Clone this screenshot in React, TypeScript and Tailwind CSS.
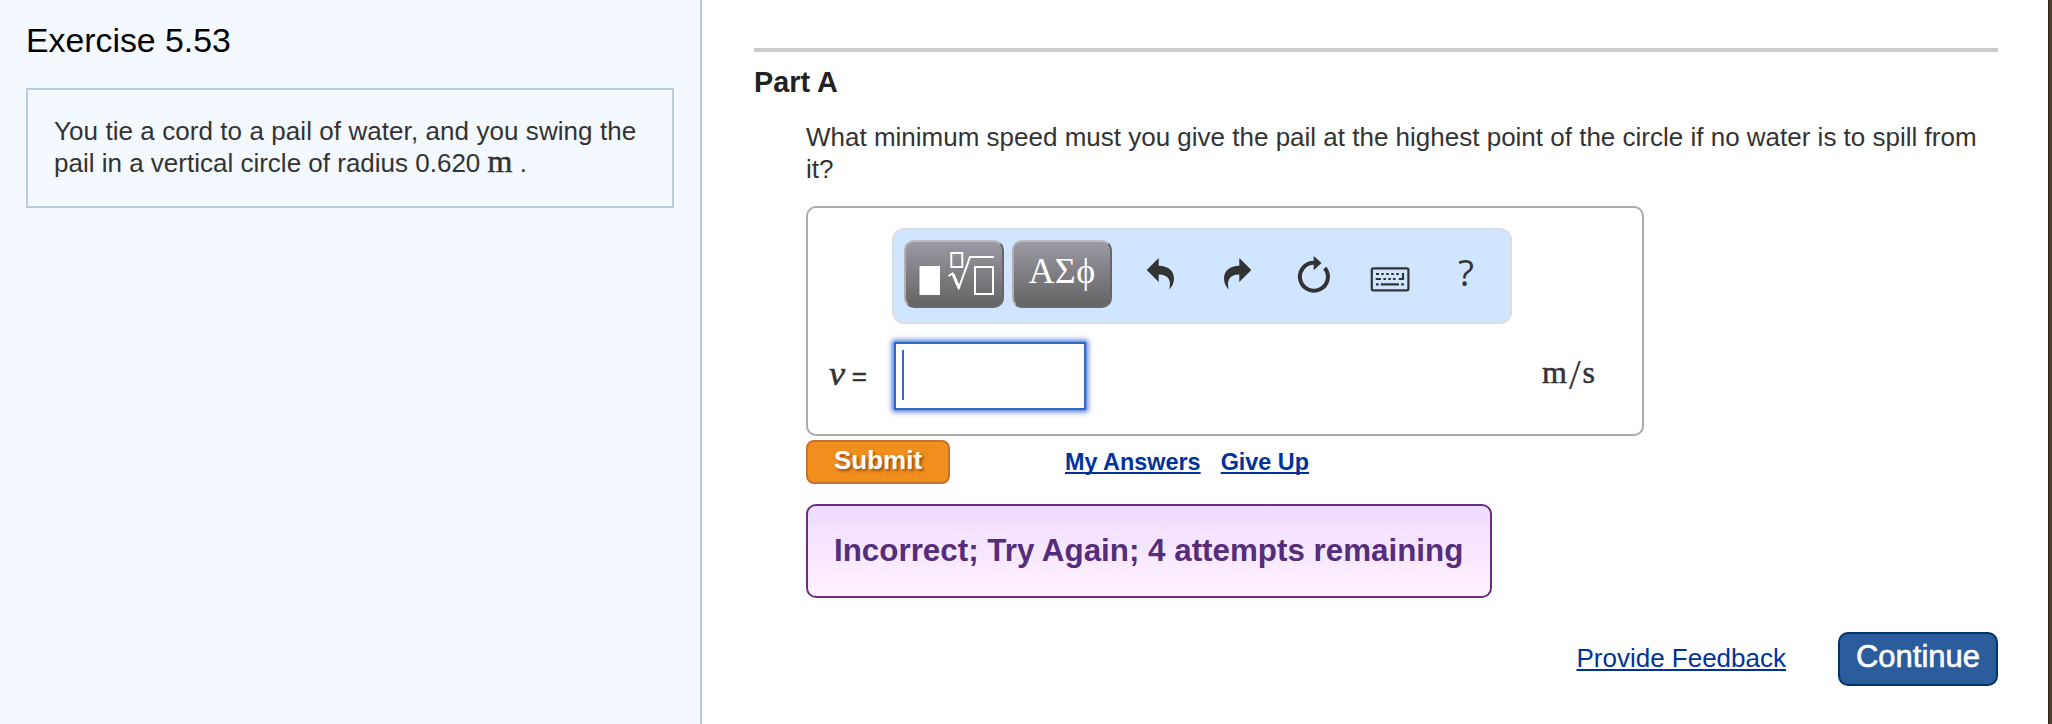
import React from 'react';

const sans = "font-['Liberation_Sans',Arial,sans-serif]";
const serif = "font-['Liberation_Serif','Times_New_Roman',serif]";
const mathStroke = '[-webkit-text-stroke:0.5px_#333]';

const TemplateIcon = () => (
  <svg width="96" height="64" viewBox="2 2 96 64" fill="none" stroke="#fff">
    <rect x="15.5" y="26" width="20.5" height="29" fill="#fff" stroke="none" />
    <rect x="47.3" y="13" width="11" height="14" strokeWidth="2" />
    <path d="M44.5 36L48.5 33.5L54.8 48L66 17H90" strokeWidth="2" />
    <path d="M49 34L55 48" strokeWidth="3" />
    <rect x="71" y="27" width="18" height="27" strokeWidth="2" />
  </svg>
);

const ArrowIcon = ({ className }: { className?: string }) => (
  <svg width="32" height="36" viewBox="0 0 32 36" fill="#333" className={className}>
    <path d="M2.7 14L14.7 2V9.7C24 10 30 14.5 30 22.5C30 27 28 31 25.2 33.5C27.5 25 25 18.5 14.7 18.5V26Z" />
  </svg>
);

const ResetIcon = () => (
  <svg width="36" height="40" viewBox="0 0 36 40">
    <path d="M28.8 13.9A14 14 0 1 1 18 8.7" fill="none" stroke="#333" strokeWidth="4" />
    <path d="M17.7 2V16.3L25.5 8.9Z" fill="#333" />
  </svg>
);

const KeyboardIcon = () => (
  <svg width="40" height="25" viewBox="0 0 40 25" fill="none" stroke="#333" strokeWidth="2.2">
    <rect x="1.8" y="1.3" width="36.6" height="22" rx="1.5" />
    <path d="M6 7H9M11.2 7H13.8M16.2 7H18.8M21.2 7H23.8M26.2 7H28.8" />
    <path d="M5.7 12H11M13.4 12H16M18.2 12H20.8M23 12H25.6M28.8 12H34M33 6V13" />
    <path d="M6 17.3H8.6M10.8 17.3H29M31.2 17.3H33.8" />
  </svg>
);

const ToolButton = ({ children }: { children: React.ReactNode }) => (
  <button className="flex h-[68px] w-[100px] items-center justify-center rounded-[10px] border-2 border-t-[#bbb] border-l-[#b0b0b4] border-r-[#666] border-b-[#6b6b6b] bg-linear-to-b from-[#9b99a3] to-[#646464]">
    {children}
  </button>
);

const Toolbar = () => (
  <div className="flex h-24 w-[620px] items-start rounded-xl border-2 border-[#ddd] bg-[#d0e5ff] p-2.5">
    <div className="flex gap-2">
      <ToolButton>
        <TemplateIcon />
      </ToolButton>
      <ToolButton>
        <span className={`${serif} pb-1.5 text-[36px] leading-[48px] tracking-[0.4px] text-white`}>ΑΣϕ</span>
      </ToolButton>
    </div>
    <ArrowIcon className="mt-4 ml-8" />
    <ArrowIcon className="mt-4 ml-[46px] -scale-x-100" />
    <div className="mt-3.5 ml-[42px]">
      <ResetIcon />
    </div>
    <div className="mt-[27px] ml-[38px]">
      <KeyboardIcon />
    </div>
    <span className="mt-2 ml-12 font-['Open_Sans',sans-serif] text-[37px] leading-[48px] text-[#333]">?</span>
  </div>
);

const AnswerBox = () => (
  <div className="mt-[15px] h-[230px] w-[838px] rounded-[10px] border-2 border-[#aaa] pt-5">
    <div className="pl-[84px]">
      <Toolbar />
    </div>
    <div className="mt-[18px] flex h-[68px] items-center">
      <div className="flex w-[86px] items-baseline pb-[3px] pl-[21px] text-[#333]">
        <span className={`${serif} ${mathStroke} origin-left scale-x-110 text-[33px] leading-8 italic`}>v</span>
        <span className={`${mathStroke} ml-2 text-[26px] leading-8`}>=</span>
      </div>
      <div className="h-[68px] w-48 border-2 border-[#3366cc] bg-white px-1.5 pt-1.5 shadow-[0_0_5px_2px_rgba(51,102,204,0.9)]">
        <div className="h-[50px] w-0.5 bg-[#3366dd]" />
      </div>
      <div className={`${serif} ${mathStroke} ml-[456px] flex items-baseline pb-3 text-[32px] leading-8 text-[#333]`}>
        <span>m</span>
        <span className="mx-0.5 translate-y-1.5 text-[42px] [-webkit-text-stroke:0px]">/</span>
        <span>s</span>
      </div>
    </div>
  </div>
);

export default function App() {
  return (
    <div className={`${sans} flex h-[724px] w-full overflow-hidden bg-white`}>
      <aside className="w-[702px] shrink-0 border-r-2 border-[#b9cddf] bg-[#f4f8ff] pt-5 pl-[26px]">
        <h1 className="text-[33.8px] leading-10 text-black">Exercise 5.53</h1>
        <div className="mt-7 h-[120px] w-[648px] border-2 border-[#b9cddf] px-[26px] pt-[25px] text-[26px] leading-8 whitespace-nowrap text-[#333]">
          <p className="tracking-[0.07px]">You tie a cord to a pail of water, and you swing the</p>
          <p className="h-8">
            pail in a vertical circle of radius 0.620{' '}
            <span className={`${serif} ${mathStroke} text-[32px] leading-[0]`}>m</span> .
          </p>
        </div>
      </aside>

      <main className="w-[1346px] shrink-0 pt-12 pr-[50px] pl-[52px]">
        <hr className="border-t-4 border-[#ccc]" />
        <h2 className="mt-[14px] text-[28.8px] leading-8 font-bold text-[#222]">Part A</h2>
        <section className="pl-[52px]">
          <p className="mt-[23px] text-[26px] leading-8 whitespace-nowrap text-[#333]">
            What minimum speed must you give the pail at the highest point of the circle if no water is to spill from
            <br />
            it?
          </p>
          <div className="pt-1.5">
            <AnswerBox />
          </div>

          {/* Submit row */}
          <div className="mt-1 flex h-11 items-start font-bold">
            <button className="h-11 w-36 rounded-lg border-2 border-[#c87030] bg-[#f08e1e] pb-1 text-[26px] leading-9 text-white [text-shadow:2px_2px_3px_rgba(120,50,0,0.7)]">
              Submit
            </button>
            <div className="ml-[115px] flex gap-5 pt-1.5 text-[23.4px] leading-8 text-[#003399]">
              <a className="underline decoration-2 underline-offset-2 [text-decoration-skip-ink:none]">My Answers</a>
              <a className="underline decoration-2 underline-offset-2 [text-decoration-skip-ink:none]">Give Up</a>
            </div>
          </div>

          <div className="mt-5 flex h-[94px] w-[686px] items-center rounded-[10px] border-2 border-[#6b2c85] bg-linear-to-b from-[#f0dcff] to-[#fff2ff] pl-[26px] text-[31.35px] font-bold whitespace-nowrap text-[#552d7a]">
            Incorrect; Try Again; 4 attempts remaining
          </div>
        </section>

        <div className="mt-[34px] flex h-[54px] items-start justify-end">
          <a className="pt-[10px] text-[26px] leading-8 text-[#003399] underline decoration-2 underline-offset-2 [text-decoration-skip-ink:none]">
            Provide Feedback
          </a>
          <button className="ml-[52px] h-[54px] w-40 rounded-[10px] border-2 border-[#003366] bg-[#2b5c9b] pb-1 text-[31px] leading-[46px] text-white [-webkit-text-stroke:0.6px_#fff]">
            Continue
          </button>
        </div>
      </main>

      <div className="w-1 shrink-0 border-l border-[#2e2618] bg-[#4b3f2a]" />
    </div>
  );
}
